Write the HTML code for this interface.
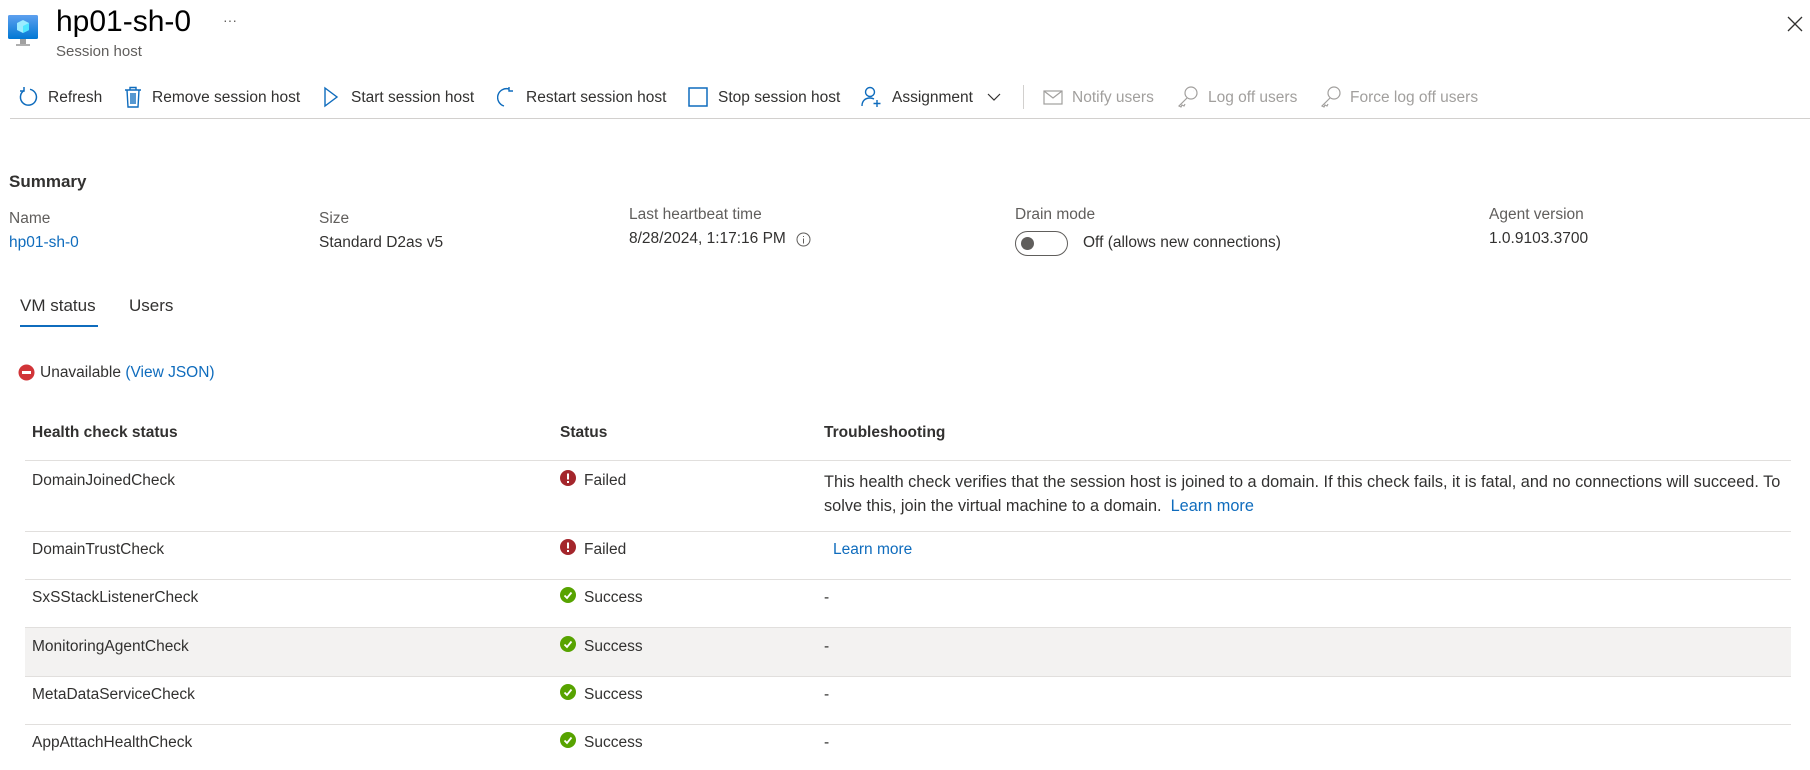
<!DOCTYPE html>
<html><head><meta charset="utf-8"><style>
*{margin:0;padding:0;box-sizing:border-box}
body{width:1810px;height:770px;background:#fff;font-family:"Liberation Sans",sans-serif;color:#323130;position:relative;overflow:hidden;font-size:15.5px}
.a{position:absolute;white-space:nowrap}
.lnk{color:#0f6cbd}
.tb{position:absolute;top:88px;font-size:15.5px;white-space:nowrap;line-height:20px}
.dis{color:#a19f9d}
.ic{position:absolute;top:86px}
.hr{position:absolute;left:25px;width:1766px;height:1px;background:#e1dfdd}
</style></head><body>
<svg class="a" style="left:8px;top:12px" width="30" height="36" viewBox="0 0 30 36">
<defs><linearGradient id="g" x1="0" y1="0" x2="0" y2="1"><stop offset="0" stop-color="#5ea0ef"/><stop offset="1" stop-color="#0078d4"/></linearGradient></defs>
<rect x="0" y="3" width="30" height="24" rx="1.5" fill="url(#g)"/>
<polygon points="15,8 21,11 21,18 15,21 9,18 9,11" fill="#9cebff"/>
<polygon points="15,14 21,11 21,18 15,21" fill="#50e6ff"/>
<rect x="12" y="27" width="6" height="5" fill="#a0a0a0"/><rect x="8" y="32" width="14" height="2" fill="#b0b0b0"/>
</svg>
<div class="a" style="left:56px;top:5px;font-size:30px;color:#000">hp01-sh-0</div>
<div class="a" style="left:223px;top:12px;font-size:14px;color:#605e5c">···</div>
<div class="a" style="left:56px;top:43px;font-size:15px;color:#605e5c">Session host</div>
<svg class="a" style="left:1787px;top:16px" width="16" height="16" viewBox="0 0 16 16"><path d="M1 1L15 15M15 1L1 15" stroke="#323130" stroke-width="1.3"/></svg>

<svg class="ic" style="left:17px" width="22" height="22" viewBox="0 0 22 22" fill="none" stroke="#0f6cbd" stroke-width="1.5"><path d="M7 4.5A8 8 0 1 0 13 3.3"/><path d="M7 1v4H3"/></svg>
<div class="tb" style="left:48px">Refresh</div>
<svg class="ic" style="left:124px" width="18" height="22" viewBox="0 0 18 22" fill="none" stroke="#0f6cbd" stroke-width="1.4"><path d="M1 4h16M6 4V1.5h6V4M3 4l1 17h10l1-17M7 7v11M9 7v11M11 7v11"/></svg>
<div class="tb" style="left:152px">Remove session host</div>
<svg class="ic" style="left:323px" width="16" height="22" viewBox="0 0 16 22" fill="none" stroke="#0f6cbd" stroke-width="1.4"><path d="M2 2l12 9-12 9z"/></svg>
<div class="tb" style="left:351px">Start session host</div>
<svg class="ic" style="left:497px" width="20" height="24" viewBox="0 0 20 24" fill="none" stroke="#0f6cbd" stroke-width="1.4"><path d="M12 3A8 8 0 0 0 7 20"/><path d="M12 1v4h4"/></svg>
<div class="tb" style="left:526px">Restart session host</div>
<svg class="ic" style="left:688px;top:87px" width="20" height="20" viewBox="0 0 20 20" fill="none" stroke="#0f6cbd" stroke-width="1.5"><rect x="1" y="1" width="18" height="18"/></svg>
<div class="tb" style="left:718px">Stop session host</div>
<svg class="ic" style="left:861px" width="22" height="22" viewBox="0 0 22 22" fill="none" stroke="#0f6cbd" stroke-width="1.4"><circle cx="9" cy="6" r="4.5"/><path d="M1 20c0-5 3-8 8-8 2 0 3 .5 4 1M16 14v7M12.5 17.5h7"/></svg>
<div class="tb" style="left:892px">Assignment</div>
<svg class="ic" style="left:987px;top:93px" width="14" height="9" viewBox="0 0 14 9" fill="none" stroke="#323130" stroke-width="1.2"><path d="M1 1l6 6 6-6"/></svg>
<div class="a" style="left:1023px;top:85px;width:1px;height:24px;background:#d2d0ce"></div>
<svg class="ic" style="left:1043px;top:90px" width="20" height="15" viewBox="0 0 20 15" fill="none" stroke="#a19f9d" stroke-width="1.2"><rect x="1" y="1" width="18" height="13"/><path d="M1 1l9 7 9-7"/></svg>
<div class="tb dis" style="left:1072px">Notify users</div>
<svg class="ic" style="left:1177px" width="22" height="22" viewBox="0 0 22 22" fill="none" stroke="#a19f9d" stroke-width="1.2"><circle cx="14" cy="7" r="6"/><path d="M10 12L2 20l2 1 1-2 2 1 1-2M16 5h.1"/></svg>
<div class="tb dis" style="left:1208px">Log off users</div>
<svg class="ic" style="left:1320px" width="22" height="22" viewBox="0 0 22 22" fill="none" stroke="#a19f9d" stroke-width="1.2"><circle cx="14" cy="7" r="6"/><path d="M10 12L2 20l2 1 1-2 2 1 1-2M16 5h.1"/></svg>
<div class="tb dis" style="left:1350px">Force log off users</div>
<div class="a" style="left:10px;top:118px;width:1800px;height:1px;background:#d2d0ce"></div>

<div class="a" style="left:9px;top:172px;font-size:17px;font-weight:bold;color:#323130">Summary</div>
<div class="a" style="left:9px;top:210px;color:#605e5c">Name</div>
<div class="a lnk" style="left:9px;top:234px">hp01-sh-0</div>
<div class="a" style="left:319px;top:210px;color:#605e5c">Size</div>
<div class="a" style="left:319px;top:234px">Standard D2as v5</div>
<div class="a" style="left:629px;top:206px;color:#605e5c">Last heartbeat time</div>
<div class="a" style="left:629px;top:230px">8/28/2024, 1:17:16 PM</div>
<svg class="a" style="left:796px;top:232px" width="15" height="15" viewBox="0 0 15 15" fill="none" stroke="#605e5c"><circle cx="7.5" cy="7.5" r="6.5"/><path d="M7.5 6.5v5M7.5 4v1"/></svg>
<div class="a" style="left:1015px;top:206px;color:#605e5c">Drain mode</div>
<div class="a" style="left:1015px;top:231px;width:53px;height:25px;border:1px solid #605e5c;border-radius:13px"></div>
<div class="a" style="left:1021px;top:237px;width:13px;height:13px;border-radius:50%;background:#605e5c"></div>
<div class="a" style="left:1083px;top:234px">Off (allows new connections)</div>
<div class="a" style="left:1489px;top:206px;color:#605e5c">Agent version</div>
<div class="a" style="left:1489px;top:230px">1.0.9103.3700</div>

<div class="a" style="left:20px;top:296px;font-size:17px;color:#323130">VM status</div>
<div class="a" style="left:129px;top:296px;font-size:17px;color:#323130">Users</div>
<div class="a" style="left:20px;top:325px;width:78px;height:2px;background:#0f6cbd"></div>

<svg class="a" style="left:18px;top:364px" width="17" height="17" viewBox="0 0 17 17"><circle cx="8.5" cy="8.5" r="8" fill="#d13438"/><rect x="4" y="7" width="9" height="3" fill="#fff"/></svg>
<div class="a" style="left:40px;top:364px">Unavailable <span class="lnk">(View JSON)</span></div>

<div class="a" style="left:32px;top:424px;font-weight:bold">Health check status</div>
<div class="a" style="left:560px;top:424px;font-weight:bold">Status</div>
<div class="a" style="left:824px;top:424px;font-weight:bold">Troubleshooting</div>
<div class="hr" style="top:460px"></div>
<div class="a" style="left:25px;top:628px;width:1766px;height:48px;background:#f3f2f1"></div>
<div class="hr" style="top:531px"></div>
<div class="hr" style="top:579px"></div>
<div class="hr" style="top:627px"></div>
<div class="hr" style="top:676px"></div>
<div class="hr" style="top:724px"></div>

<div class="a" style="left:32px;top:472px">DomainJoinedCheck</div>
<div class="a" style="left:32px;top:541px">DomainTrustCheck</div>
<div class="a" style="left:32px;top:589px">SxSStackListenerCheck</div>
<div class="a" style="left:32px;top:638px">MonitoringAgentCheck</div>
<div class="a" style="left:32px;top:686px">MetaDataServiceCheck</div>
<div class="a" style="left:32px;top:734px">AppAttachHealthCheck</div>

<svg class="a" style="left:560px;top:470px" width="16" height="16" viewBox="0 0 16 16"><circle cx="8" cy="8" r="8" fill="#a4262c"/><rect x="7" y="3.5" width="2" height="6" fill="#fff"/><rect x="7" y="11" width="2" height="2" fill="#fff"/></svg>
<div class="a" style="left:584px;top:472px">Failed</div>
<svg class="a" style="left:560px;top:539px" width="16" height="16" viewBox="0 0 16 16"><circle cx="8" cy="8" r="8" fill="#a4262c"/><rect x="7" y="3.5" width="2" height="6" fill="#fff"/><rect x="7" y="11" width="2" height="2" fill="#fff"/></svg>
<div class="a" style="left:584px;top:541px">Failed</div>
<svg class="a" style="left:560px;top:587px" width="16" height="16" viewBox="0 0 16 16"><circle cx="8" cy="8" r="8" fill="#57a300"/><path d="M4.5 8.5l2.5 2.5 4.5-5.5" stroke="#fff" stroke-width="1.8" fill="none"/></svg>
<div class="a" style="left:584px;top:589px">Success</div>
<svg class="a" style="left:560px;top:636px" width="16" height="16" viewBox="0 0 16 16"><circle cx="8" cy="8" r="8" fill="#57a300"/><path d="M4.5 8.5l2.5 2.5 4.5-5.5" stroke="#fff" stroke-width="1.8" fill="none"/></svg>
<div class="a" style="left:584px;top:638px">Success</div>
<svg class="a" style="left:560px;top:684px" width="16" height="16" viewBox="0 0 16 16"><circle cx="8" cy="8" r="8" fill="#57a300"/><path d="M4.5 8.5l2.5 2.5 4.5-5.5" stroke="#fff" stroke-width="1.8" fill="none"/></svg>
<div class="a" style="left:584px;top:686px">Success</div>
<svg class="a" style="left:560px;top:732px" width="16" height="16" viewBox="0 0 16 16"><circle cx="8" cy="8" r="8" fill="#57a300"/><path d="M4.5 8.5l2.5 2.5 4.5-5.5" stroke="#fff" stroke-width="1.8" fill="none"/></svg>
<div class="a" style="left:584px;top:734px">Success</div>

<div class="a" style="left:824px;top:470px;line-height:24px;font-size:16.3px">This health check verifies that the session host is joined to a domain. If this check fails, it is fatal, and no connections will succeed. To<br>solve this, join the virtual machine to a domain.&nbsp; <span class="lnk">Learn more</span></div>
<div class="a lnk" style="left:833px;top:541px">Learn more</div>
<div class="a" style="left:824px;top:589px">-</div>
<div class="a" style="left:824px;top:638px">-</div>
<div class="a" style="left:824px;top:686px">-</div>
<div class="a" style="left:824px;top:734px">-</div>
</body></html>
